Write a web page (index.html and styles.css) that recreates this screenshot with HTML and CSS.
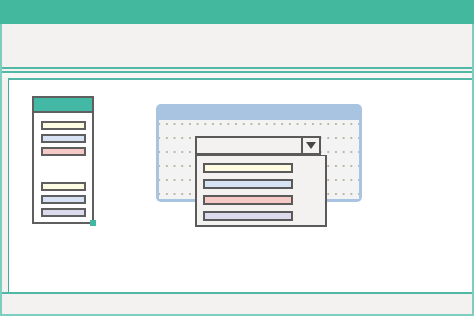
FILE: index.html
```html
<!DOCTYPE html>
<html>
<head>
<meta charset="utf-8">
<link rel="stylesheet" href="styles.css">
</head>
<body>
<div class="window">
  <div class="titlebar"></div>
  <div class="frame">
    <div class="toolbar"></div>
    <div class="rule"></div>
    <div class="spacer"></div>
    <div class="canvas">
      <div class="panel">
        <div class="panel-head"></div>
        <div class="panel-body">
          <div class="group">
            <div class="item yellow"></div>
            <div class="item blue"></div>
            <div class="item pink"></div>
          </div>
          <div class="group">
            <div class="item yellow"></div>
            <div class="item blue"></div>
            <div class="item lavender"></div>
          </div>
        </div>
        <div class="handle"></div>
      </div>
      <div class="dialog">
        <div class="dialog-head"></div>
        <div class="dialog-body"></div>
        <div class="combo">
          <div class="combo-field"></div>
          <div class="combo-btn"><span class="tri"></span></div>
        </div>
        <div class="list">
          <div class="litem yellow"></div>
          <div class="litem blue"></div>
          <div class="litem pink"></div>
          <div class="litem lavender"></div>
        </div>
      </div>
    </div>
    <div class="status"></div>
  </div>
</div>
</body>
</html>
```
FILE: styles.css
```css
html, body {
  margin: 0;
  padding: 0;
  background: #ffffff;
  font-family: "Liberation Sans", Arial, sans-serif;
}
.window {
  width: 474px;
  height: 316px;
  display: flex;
  flex-direction: column;
  overflow: hidden;
}
.titlebar {
  height: 24px;
  background: #43b89f;
  flex: none;
}
.frame {
  flex: 1;
  display: flex;
  flex-direction: column;
  border-left: 2px solid #7ccfbf;
  border-right: 2px solid #7ccfbf;
  border-bottom: 2px solid #7ccfbf;
  background: #f3f2f0;
}
.toolbar {
  height: 43px;
  flex: none;
}
.rule {
  height: 2px;
  border-top: 2px solid #52b8a6;
  border-bottom: 2px solid #52b8a6;
  flex: none;
}
.spacer {
  height: 5px;
  flex: none;
  background: #f6f6f5;
}
.canvas {
  height: 214px;
  flex: none;
  margin-left: 6px;
  border-top: 2px solid #52b8a6;
  border-left: 1px solid #3fae99;
  background: #ffffff;
  display: flex;
  align-items: flex-start;
  padding: 16px 0 0 23px;
  box-sizing: border-box;
}
.status {
  flex: 1;
  border-top: 2px solid #52b8a6;
}

/* left panel */
.panel {
  position: relative;
  width: 62px;
  height: 128px;
  box-sizing: border-box;
  border: 2px solid #5f5f5f;
  background: #ffffff;
  display: flex;
  flex-direction: column;
}
.panel-head {
  height: 13px;
  background: #43b8a4;
  border-bottom: 2px solid #5f5f5f;
  margin: -2px -2px 0 -2px;
  border-top: 2px solid #5f5f5f;
  border-left: 2px solid #5f5f5f;
  border-right: 2px solid #5f5f5f;
}
.panel-body {
  display: flex;
  flex-direction: column;
  gap: 26px;
  padding: 8px 0 0 7px;
}
.group {
  display: flex;
  flex-direction: column;
  gap: 4px;
}
.item {
  width: 45px;
  height: 9px;
  box-sizing: border-box;
  border: 2px solid #5f5f5f;
}
.yellow { background: #fdfbe2; }
.blue { background: #d7e3f5; }
.pink { background: #f5c9c6; }
.lavender { background: #dcdaed; }
.handle {
  position: absolute;
  right: -4px;
  bottom: -4px;
  width: 6px;
  height: 6px;
  background: #43b8a0;
}

/* dialog */
.dialog {
  position: relative;
  margin: 8px 0 0 62px;
  width: 206px;
  height: 98px;
  box-sizing: border-box;
  background: #a9c4e0;
  border-radius: 5px;
  padding: 0 3px 3px 3px;
  display: flex;
  flex-direction: column;
}
.dialog-head {
  height: 16px;
  flex: none;
}
.dialog-body {
  flex: 1;
  background-color: #f3f3f3;
  background-image: radial-gradient(circle, #bfb6aa 0.7px, transparent 1px);
  background-size: 7.7px 14px;
  background-position: 4px -3px;
}
.combo {
  position: absolute;
  left: 39px;
  top: 32px;
  width: 126px;
  height: 19px;
  box-sizing: border-box;
  border: 2px solid #5a5a5a;
  background: #f3f2f0;
  display: flex;
}
.combo-field {
  flex: 1;
}
.combo-btn {
  width: 16px;
  border-left: 2px solid #5a5a5a;
  display: flex;
  align-items: center;
  justify-content: center;
}
.tri {
  width: 0;
  height: 0;
  border-left: 5px solid transparent;
  border-right: 5px solid transparent;
  border-top: 7px solid #474747;
}
.list {
  position: absolute;
  left: 39px;
  top: 51px;
  width: 132px;
  height: 72px;
  box-sizing: border-box;
  border: 2px solid #5a5a5a;
  border-top-width: 1px;
  background: #f3f2f0;
  display: flex;
  flex-direction: column;
  gap: 6px;
  padding: 7px 0 0 6px;
}
.litem {
  width: 90px;
  height: 10px;
  box-sizing: border-box;
  border: 2px solid #5a5a5a;
}
```
